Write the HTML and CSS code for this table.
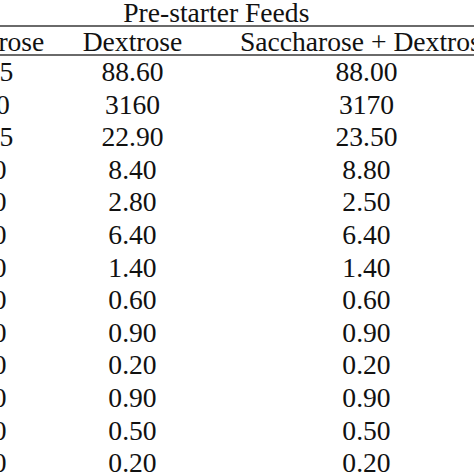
FILE: index.html
```html
<!DOCTYPE html>
<html lang="en">
<head>
<meta charset="utf-8">
<title>Pre-starter Feeds</title>
<link rel="stylesheet" href="styles.css">
</head>
<body>
<div class="frame">
<table class="feeds">
  <colgroup>
    <col class="c1">
    <col class="c2">
    <col class="c3">
  </colgroup>
  <thead>
    <tr class="title-row"><th colspan="3">Pre-starter Feeds</th></tr>
    <tr class="head-row"><th>Saccharose</th><th>Dextrose</th><th>Saccharose + Dextrose</th></tr>
  </thead>
  <tbody>
    <tr><td>88.25</td><td>88.60</td><td>88.00</td></tr>
    <tr><td>3150</td><td>3160</td><td>3170</td></tr>
    <tr><td>22.75</td><td>22.90</td><td>23.50</td></tr>
    <tr><td>8.50</td><td>8.40</td><td>8.80</td></tr>
    <tr><td>2.90</td><td>2.80</td><td>2.50</td></tr>
    <tr><td>6.40</td><td>6.40</td><td>6.40</td></tr>
    <tr><td>1.40</td><td>1.40</td><td>1.40</td></tr>
    <tr><td>0.60</td><td>0.60</td><td>0.60</td></tr>
    <tr><td>0.90</td><td>0.90</td><td>0.90</td></tr>
    <tr><td>0.20</td><td>0.20</td><td>0.20</td></tr>
    <tr><td>0.90</td><td>0.90</td><td>0.90</td></tr>
    <tr><td>0.50</td><td>0.50</td><td>0.50</td></tr>
    <tr><td>0.20</td><td>0.20</td><td>0.20</td></tr>
  </tbody>
</table>
</div>
</body>
</html>
```
FILE: styles.css
```css
html, body {
  margin: 0;
  padding: 0;
  background: #ffffff;
  overflow: hidden;
}
.frame {
  width: 474px;
  height: 474px;
  overflow: hidden;
}
.feeds {
  margin-left: -92.4px;
  border-collapse: collapse;
  table-layout: fixed;
  width: 617.4px;
  font-family: "Liberation Serif", "Times New Roman", serif;
  font-size: 27.6px;
  color: #111111;
}
.c1 { width: 149.4px; }
.c2 { width: 151px; }
.c3 { width: 317px; }
.feeds th,
.feeds td {
  padding: 0;
  text-align: center;
  font-weight: normal;
  white-space: nowrap;
}
.title-row th {
  height: 25px;
  line-height: 25px;
  border-bottom: 2px solid #6a6a6a;
}
.head-row th {
  line-height: 24px;
  padding-top: 3px;
  border-bottom: 2px solid #6a6a6a;
}
.feeds td {
  line-height: 32.6px;
  height: 32.6px;
}
```
